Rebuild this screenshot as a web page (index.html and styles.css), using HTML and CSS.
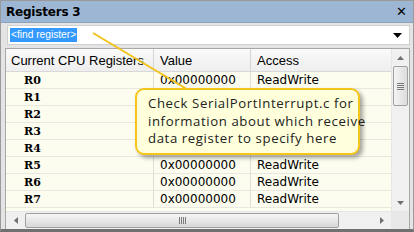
FILE: index.html
```html
<!DOCTYPE html>
<html>
<head>
<meta charset="utf-8">
<link rel="stylesheet" href="styles.css">
</head>
<body>
<div class="window">
  <div class="titlebar">
    <span class="title">Registers 3</span>
    <span class="close">✕</span>
  </div>
  <div class="searchbar">
    <div class="search">
      <span class="sel">&lt;find register&gt;</span>
      <svg class="dd" width="9" height="5" viewBox="0 0 9 5"><path d="M0 0H9L4.5 5Z" fill="#000"/></svg>
    </div>
  </div>
  <div class="grid">
    <div class="grid-main">
      <div class="table">
        <div class="row head">
          <div class="c1">Current CPU Registers</div>
          <div class="c2">Value</div>
          <div class="c3">Access</div>
        </div>
        <div class="row"><div class="c1 reg">R0</div><div class="c2">0x00000000</div><div class="c3">ReadWrite</div></div>
        <div class="row"><div class="c1 reg">R1</div><div class="c2">0x00000000</div><div class="c3">ReadWrite</div></div>
        <div class="row"><div class="c1 reg">R2</div><div class="c2">0x00000000</div><div class="c3">ReadWrite</div></div>
        <div class="row"><div class="c1 reg">R3</div><div class="c2">0x00000000</div><div class="c3">ReadWrite</div></div>
        <div class="row"><div class="c1 reg">R4</div><div class="c2">0x00000000</div><div class="c3">ReadWrite</div></div>
        <div class="row"><div class="c1 reg">R5</div><div class="c2">0x00000000</div><div class="c3">ReadWrite</div></div>
        <div class="row"><div class="c1 reg">R6</div><div class="c2">0x00000000</div><div class="c3">ReadWrite</div></div>
        <div class="row"><div class="c1 reg">R7</div><div class="c2">0x00000000</div><div class="c3">ReadWrite</div></div>
      </div>
      <div class="vscroll">
        <div class="arrow up"><svg width="7" height="4" viewBox="0 0 7 4"><path d="M0 4H7L3.5 0Z" fill="#707070"/></svg></div>
        <div class="vthumb"><span class="grip-v"></span></div>
        <div class="vtrack"></div>
        <div class="arrow down"><svg width="7" height="4" viewBox="0 0 7 4"><path d="M0 0H7L3.5 4Z" fill="#707070"/></svg></div>
      </div>
    </div>
    <div class="hrow">
      <div class="hscroll">
        <div class="harrow"><svg width="4" height="7" viewBox="0 0 4 7"><path d="M4 0V7L0 3.5Z" fill="#707070"/></svg></div>
        <div class="hthumb"><span class="grip-h"></span></div>
        <div class="htrack"></div>
        <div class="harrow"><svg width="4" height="7" viewBox="0 0 4 7"><path d="M0 0V7L4 3.5Z" fill="#707070"/></svg></div>
      </div>
      <div class="corner"></div>
    </div>
  </div>
  <svg class="pointer" width="414" height="232" viewBox="0 0 414 232"><line x1="93" y1="33" x2="190" y2="91" stroke="#f3c31a" stroke-width="2"/></svg>
  <div class="callout">Check SerialPortInterrupt.c for<br>information about which receive<br>data register to specify here</div>
</div>
</body>
</html>
```
FILE: styles.css
```css
* { box-sizing: border-box; }
html, body { margin: 0; padding: 0; }
body { width: 414px; height: 232px; overflow: hidden; background: #fff; }
.window {
  position: relative;
  width: 414px; height: 232px;
  background: #e4e4e4;
  border: 1px solid #9a9a9a;
  border-bottom: 3px solid #707070;
  display: flex; flex-direction: column;
  font-family: "DejaVu Sans", sans-serif;
}
.titlebar {
  height: 22px;
  background: #9cb6d3;
  display: flex; align-items: center; justify-content: space-between;
  padding: 0 6px 0 5px;
  border-bottom: 1px solid #8aa3bf;
}
.title { font-family: "DejaVu Sans", sans-serif; font-weight: bold; font-size: 12px; color: #000; letter-spacing: -0.2px; }
.close { font-family: "DejaVu Sans", sans-serif; font-size: 13px; font-weight: bold; color: #000; }
.searchbar { padding: 2px 3px 3px 6px; }
.search {
  height: 20px; background: #fff;
  border: 1px solid #d0d0d0;
  display: flex; align-items: center; justify-content: space-between;
  padding: 0 7px 0 2px;
}
.sel {
  background: #3399ff; color: #fff;
  font-family: "Liberation Sans", Arial, sans-serif; font-size: 10.2px;
  line-height: 14px; padding: 0 1px;
}
.grid {
  flex: 1;
  margin: 0 3px 0 4px;
  border: 1px solid #a8a8a8;
  border-bottom: none;
  background: #fff;
  display: flex; flex-direction: column;
}
.grid-main { flex: 1; display: flex; min-height: 0; }
.table { flex: 1; display: flex; flex-direction: column; background: #fdfdef; overflow: hidden; }
.row { display: flex; height: 17px; align-items: center; border-bottom: 1px solid #e8e8e0; font-size: 12px; font-family: "DejaVu Sans", sans-serif; flex-shrink: 0; }
.row.head { height: 23px; background: linear-gradient(#fafafa, #eeeeee); border-bottom: 1px solid #d8d8d8; font-family: "Liberation Sans", Arial, sans-serif; font-size: 13px; }
.c1 { width: 148px; padding-left: 5px; height: 100%; display: flex; align-items: center; border-right: 1px solid #e0e0d8; }
.c2 { width: 97px; padding-left: 6px; height: 100%; display: flex; align-items: center; border-right: 1px solid #e0e0d8; }
.c3 { flex: 1; padding-left: 6px; height: 100%; display: flex; align-items: center; }
.head .c1, .head .c2 { border-right: 1px solid #d4d4d4; }
.reg { padding-left: 18px; font-family: "DejaVu Serif", serif; font-weight: bold; font-size: 11px; }
.vscroll { width: 18px; background: #f0f0f0; display: flex; flex-direction: column; align-items: center; border-left: 1px solid #e6e6e6; }
.arrow { height: 17px; width: 100%; display: flex; align-items: center; justify-content: center; }
.vthumb {
  width: 15px; height: 40px;
  border: 1px solid #a0a0a0; border-radius: 2px;
  background: linear-gradient(90deg, #f4f4f4, #dcdcdc);
  display: flex; align-items: center; justify-content: center;
}
.grip-v { width: 7px; height: 7px; background: repeating-linear-gradient(#7a7a7a 0 1px, transparent 1px 2px); }
.vtrack { flex: 1; }
.hrow { height: 18px; display: flex; border-top: 1px solid #e6e6e6; }
.hscroll { flex: 1; display: flex; align-items: center; background: #f0f0f0; }
.harrow { width: 19px; height: 100%; display: flex; align-items: center; justify-content: center; }
.hthumb {
  width: 314px; height: 15px;
  border: 1px solid #a0a0a0; border-radius: 2px;
  background: linear-gradient(#f6f6f6, #d8d8d8);
  display: flex; align-items: center; justify-content: center;
}
.grip-h { width: 7px; height: 7px; background: repeating-linear-gradient(90deg, #7a7a7a 0 1px, transparent 1px 2px); }
.htrack { flex: 1; }
.corner { width: 18px; background: #e8e8e8; }
.pointer { position: absolute; left: -1px; top: -1px; pointer-events: none; }
.callout {
  position: absolute; left: 134px; top: 87px;
  width: 225px; height: 67px;
  background: #ffffdc;
  border: 2px solid #f5c51c;
  border-radius: 9px;
  box-shadow: 3px 3px 4px rgba(0,0,0,0.35);
  padding: 5px 0 0 11px;
  font-family: "Open Sans", Lato, sans-serif; font-size: 13.2px; line-height: 17.5px;
  color: #222;
  letter-spacing: 0.6px;
  white-space: nowrap;
}
```
